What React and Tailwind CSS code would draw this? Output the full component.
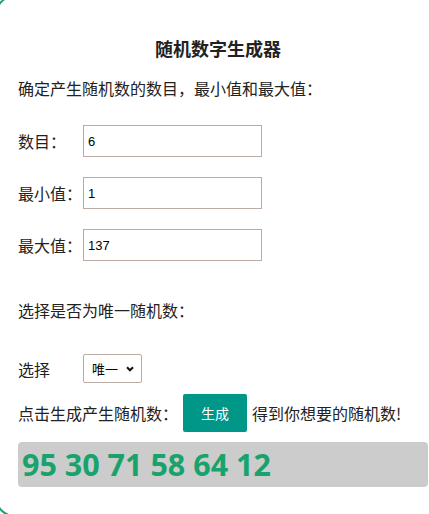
import React, { useState } from "react";

const cjk = { fontFamily: '"Microsoft YaHei", "Noto Sans CJK SC", "Noto Sans", sans-serif' };

export default function App() {
	const [count, setCount] = useState("6");
	const [min, setMin] = useState("1");
	const [max, setMax] = useState("137");
	const [mode, setMode] = useState("unique");
	const [nums, setNums] = useState([95, 30, 71, 58, 64, 12]);

	// generate numbers, unique if asked and possible
	const generate = () => {
		const n = parseInt(count) || 0;
		const lo = parseInt(min) || 0;
		const hi = parseInt(max) || 0;
		const out = [];
		let guard = 0;
		while (out.length < n && guard < 10000) {
			guard++;
			const v = Math.floor(Math.random() * (hi - lo + 1)) + lo;
			if (mode === "unique" && out.includes(v)) continue;
			out.push(v);
		}
		setNums(out);
	};

	const fields = [
		{ label: "数目：", value: count, set: setCount },
		{ label: "最小值：", value: min, set: setMin },
		{ label: "最大值：", value: max, set: setMax },
	];

	return (
		<div className="h-[514px] overflow-hidden bg-white text-[#222]" style={cjk}>
			<div className="-mt-[5px] -ml-[5px] w-[470px] h-[522px] rounded-[20px] border-2 border-[#1aa36b] pl-[21px] pt-[38px]">
				<h2 className="w-[400px] text-center text-[18px] font-bold leading-[27px]">
					随机数字生成器
				</h2>
				<p className="mt-[14px] text-[16px] leading-[24px]">
					确定产生随机数的数目，最小值和最大值：
				</p>

				<div className="mt-[25px] flex flex-col gap-[20px]">
					{fields.map((f) => (
						<div key={f.label} className="flex items-center h-[32px]">
							<label className="w-[65px] text-[16px] leading-[24px]">{f.label}</label>
							<input
								className="w-[179px] h-[32px] border border-[#bcaaa4] pl-[4px] text-[13px] text-black outline-none"
								style={{ fontFamily: '"Liberation Sans", Arial, sans-serif' }}
								value={f.value}
								onChange={(e) => f.set(e.target.value)}
							/>
						</div>
					))}
				</div>

				<p className="mt-[37px] text-[16px] leading-[24px]">选择是否为唯一随机数：</p>

				<div className="mt-[32px] flex items-center h-[29px]">
					<label className="w-[65px] text-[16px] leading-[24px]">选择</label>
					<div className="flex items-center w-[59px] h-[29px] border border-[#bcaaa4] rounded-[2px]">
						<select
							className="appearance-none flex-1 pl-[8px] text-[13px] text-black outline-none bg-transparent"
							value={mode}
							onChange={(e) => setMode(e.target.value)}
						>
							<option value="unique">唯一</option>
							<option value="repeat">重复</option>
						</select>
						<svg width="8" height="6" viewBox="0 0 8 6" className="mr-[7px]">
							<path d="M1 1.3 L4 4.3 L7 1.3" fill="none" stroke="#111" strokeWidth="2" />
						</svg>
					</div>
				</div>

				<div className="mt-[11px] flex items-center h-[38px] text-[16px] leading-[24px]">
					<span>点击生成产生随机数：</span>
					<button
						onClick={generate}
						className="ml-[5px] w-[64px] h-[38px] bg-[#009688] text-white text-[14px] rounded-[2px]"
					>
						生成
					</button>
					<span className="ml-[5px]">得到你想要的随机数!</span>
				</div>

				<div className="mt-[10px] w-[410px] h-[45px] bg-[#cccccc] rounded-[4px] flex items-center pl-[4px]">
					<span
						className="text-[30.5px] font-bold text-[#17a36b] leading-none"
						style={{ fontFamily: '"Open Sans", "Noto Sans", sans-serif' }}
					>
						{nums.join(" ")}
					</span>
				</div>
			</div>
		</div>
	);
}
